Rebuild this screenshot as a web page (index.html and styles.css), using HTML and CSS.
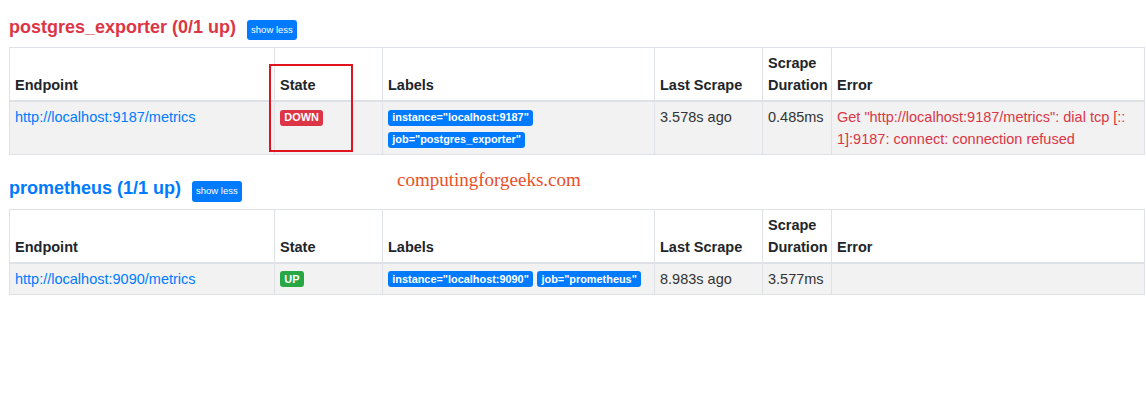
FILE: index.html
```html
<!DOCTYPE html>
<html>
<head>
<meta charset="utf-8">
<title>Targets</title>
<link rel="stylesheet" href="styles.css">
</head>
<body>
<div class="page">
  <section class="job">
    <div class="job-header">
      <h2 class="job-title danger">postgres_exporter (0/1 up)</h2>
      <button class="btn-xs">show less</button>
    </div>
    <table class="targets">
      <colgroup>
        <col class="c-endpoint"><col class="c-state"><col class="c-labels"><col class="c-last"><col class="c-dur"><col class="c-error">
      </colgroup>
      <thead>
        <tr><th>Endpoint</th><th>State</th><th>Labels</th><th>Last Scrape</th><th>Scrape Duration</th><th>Error</th></tr>
      </thead>
      <tbody>
        <tr>
          <td><a href="#" class="endpoint">http://localhost:9187/metrics</a></td>
          <td><span class="badge badge-down">DOWN</span></td>
          <td><span class="badge badge-label">instance="localhost:9187"</span> <span class="badge badge-label">job="postgres_exporter"</span></td>
          <td>3.578s ago</td>
          <td>0.485ms</td>
          <td class="error">Get "http://localhost:9187/metrics": dial tcp [::<wbr>1]:9187: connect: connection refused</td>
        </tr>
      </tbody>
    </table>
  </section>

  <section class="job">
    <div class="job-header">
      <h2 class="job-title primary">prometheus (1/1 up)</h2>
      <button class="btn-xs">show less</button>
    </div>
    <table class="targets">
      <colgroup>
        <col class="c-endpoint"><col class="c-state"><col class="c-labels"><col class="c-last"><col class="c-dur"><col class="c-error">
      </colgroup>
      <thead>
        <tr><th>Endpoint</th><th>State</th><th>Labels</th><th>Last Scrape</th><th>Scrape Duration</th><th>Error</th></tr>
      </thead>
      <tbody>
        <tr>
          <td><a href="#" class="endpoint">http://localhost:9090/metrics</a></td>
          <td><span class="badge badge-up">UP</span></td>
          <td><span class="badge badge-label">instance="localhost:9090"</span> <span class="badge badge-label">job="prometheus"</span></td>
          <td>8.983s ago</td>
          <td>3.577ms</td>
          <td class="error"></td>
        </tr>
      </tbody>
    </table>
  </section>

  <div class="annotation-box"></div>
  <div class="watermark">computingforgeeks.com</div>
</div>
</body>
</html>
```

FILE: styles.css
```css
html, body {
  margin: 0;
  padding: 0;
  background: #ffffff;
}

body {
  font-family: "Liberation Sans", Arial, sans-serif;
  font-size: 14.5px;
  line-height: 22px;
  color: #212529;
}

.page {
  position: relative;
  padding: 15px 0 0 9px;
  width: 1135px;
}

.job {
  margin-bottom: 21px;
}

.job-header {
  display: flex;
  align-items: baseline;
  gap: 11px;
  margin-bottom: 7px;
}

.job-title {
  margin: 0;
  font-size: 18px;
  line-height: 24px;
  font-weight: bold;
}

.danger { color: #dc3545; }
.primary { color: #007bff; }

.btn-xs {
  font-family: "Liberation Sans", Arial, sans-serif;
  font-size: 9.5px;
  line-height: 1.5;
  padding: 3px 4px;
  border: 0;
  border-radius: 3px;
  background: #007bff;
  color: #ffffff;
}

.targets {
  width: 1135px;
  table-layout: fixed;
  border-collapse: collapse;
  background: #ffffff;
}

.c-endpoint { width: 265px; }
.c-state { width: 108px; }
.c-labels { width: 272px; }
.c-last { width: 108px; }
.c-dur { width: 69px; }
.c-error { width: 313px; }

.targets th,
.targets td {
  border: 1px solid #dee2e6;
  padding: 4px 5px;
  text-align: left;
}

.targets th {
  vertical-align: bottom;
  font-weight: bold;
  color: #212529;
  border-bottom: 2px solid #dee2e6;
}

.targets td {
  vertical-align: top;
  background: #f2f2f2;
  color: #333333;
}

.endpoint {
  color: #007bff;
  text-decoration: none;
}

.targets td.error {
  color: #dc3545;
}

.badge {
  display: inline-block;
  font-size: 10.9px;
  font-weight: bold;
  line-height: 1;
  padding: 2.5px 4.3px;
  border-radius: 3px;
  color: #ffffff;
  white-space: nowrap;
  vertical-align: 1px;
}

.badge-down { background: #dc3545; }
.badge-up { background: #28a745; }
.badge-label { background: #007bff; }

.annotation-box {
  position: absolute;
  left: 269px;
  top: 64px;
  width: 80px;
  height: 84px;
  border: 2px solid #e0141e;
}

.watermark {
  position: absolute;
  left: 397px;
  top: 169px;
  font-family: "Liberation Serif", "Times New Roman", serif;
  font-size: 19px;
  line-height: 1.15;
  color: #e8502a;
}
```
